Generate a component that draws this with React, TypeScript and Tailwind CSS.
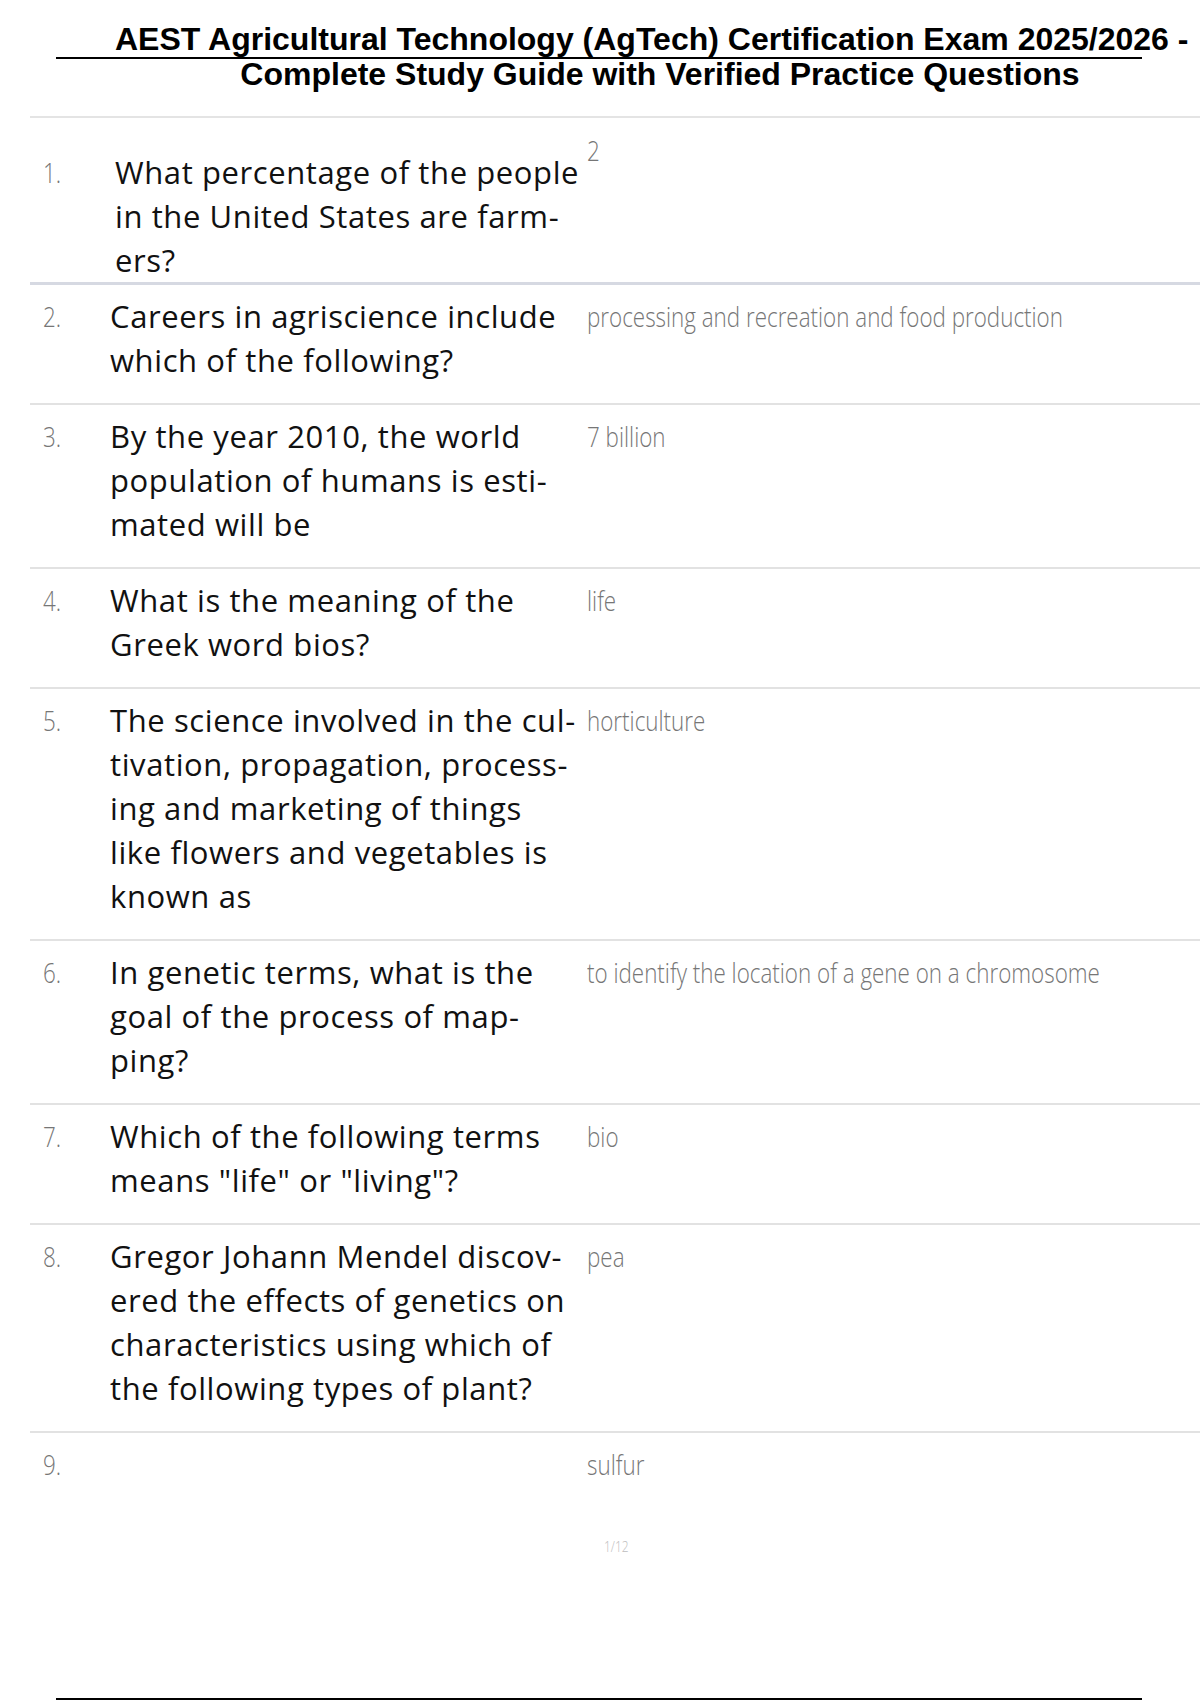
import React from 'react'

interface Row {
  num: string
  lines: string[]
  answer: string
}

// Question rows, line breaks kept as in the printed guide
const rows: Row[] = [
  { num: '1.', lines: ['What percentage of the people', 'in the United States are farm-', 'ers?'], answer: '2' },
  { num: '2.', lines: ['Careers in agriscience include', 'which of the following?'], answer: 'processing and recreation and food production' },
  { num: '3.', lines: ['By the year 2010, the world', 'population of humans is esti-', 'mated will be'], answer: '7 billion' },
  { num: '4.', lines: ['What is the meaning of the', 'Greek word bios?'], answer: 'life' },
  {
    num: '5.',
    lines: ['The science involved in the cul-', 'tivation, propagation, process-', 'ing and marketing of things', 'like flowers and vegetables is', 'known as'],
    answer: 'horticulture'
  },
  { num: '6.', lines: ['In genetic terms, what is the', 'goal of the process of map-', 'ping?'], answer: 'to identify the location of a gene on a chromosome' },
  { num: '7.', lines: ['Which of the following terms', 'means "life" or "living"?'], answer: 'bio' },
  {
    num: '8.',
    lines: ['Gregor Johann Mendel discov-', 'ered the effects of genetics on', 'characteristics using which of', 'the following types of plant?'],
    answer: 'pea'
  },
  { num: '9.', lines: [], answer: 'sulfur' }
]

const Thin = ({ children, className = '' }: { children: React.ReactNode; className?: string }) => (
  <span
    className={`inline-block origin-left scale-x-[0.8] whitespace-nowrap font-['Open_Sans',sans-serif] font-light text-[#767676] ${className}`}
  >
    {children}
  </span>
)

export default function App() {
  return (
    <div className="relative w-[1200px] h-[1700px] overflow-hidden bg-white flex flex-col">
      {/* Heading */}
      <div className="pt-[22px] font-['Liberation_Sans',Arial,sans-serif] font-bold text-[32px] text-black">
        <div className="pl-[115px] h-[34px] leading-[34px] whitespace-nowrap">
          AEST Agricultural Technology (AgTech) Certification Exam 2025/2026 -
        </div>
        <div className="ml-[56px] mt-[1px] w-[1086px] h-[2px] bg-black" />
        <div className="pl-[120px] leading-[30px] text-center whitespace-nowrap">
          Complete Study Guide with Verified Practice Questions
        </div>
      </div>

      {/* Question table */}
      <div className="ml-[30px] mt-[27px] border-t-2 border-[#e4e4e4]">
        {rows.map((row, i) => {
          const first = i === 0
          const last = i === rows.length - 1
          return (
            <div
              key={row.num}
              className={`flex ${first ? 'pt-[32px] border-b-[3px] border-[#d6d9e2]' : 'pt-[9px]'} ${
                !first && !last ? 'pb-[21px] border-b-2 border-[#e2e2e2]' : ''
              }`}
            >
              <div className="w-[80px] shrink-0 pl-[13px] h-[44px] leading-[44px] text-[28px]">
                <Thin>{row.num}</Thin>
              </div>
              <div
                className={`w-[477px] shrink-0 font-['Open_Sans',sans-serif] text-[31px] tracking-[0.6px] leading-[44px] text-[#111] ${
                  first ? 'pl-[5px]' : ''
                }`}
              >
                {row.lines.map((line) => (
                  <div key={line} className="whitespace-nowrap">
                    {line}
                  </div>
                ))}
              </div>
              <div className={`flex-1 h-[44px] leading-[44px] text-[28px] ${first ? '-mt-[22px]' : ''}`}>
                <Thin>{row.answer}</Thin>
              </div>
            </div>
          )
        })}
      </div>

      {/* Page number */}
      <div className="mt-[50px] pl-[604px] h-[20px] leading-[20px] text-[15px]">
        <Thin className="text-[#bdbdbd]">1/12</Thin>
      </div>

      {/* Footer rule */}
      <div className="mt-auto mb-0 ml-[56px] w-[1086px] h-[2px] bg-black" />
    </div>
  )
}
